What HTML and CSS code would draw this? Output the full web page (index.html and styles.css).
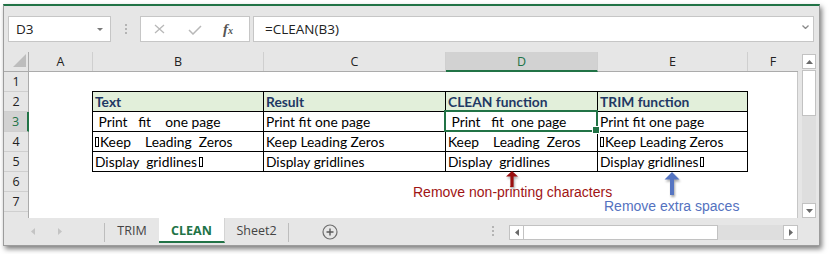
FILE: index.html
```html
<!DOCTYPE html>
<html>
<head>
<meta charset="utf-8">
<link rel="stylesheet" href="styles.css">
</head>
<body>
<div class="window">
  <div class="toolbar">
    <div class="namebox"><span>D3</span><svg class="nb-arrow" width="6" height="3" viewBox="0 0 6 3"><polygon points="0,0 6,0 3,3" fill="#7a7a7a"/></svg></div>
    <div class="grip"><i></i><i></i><i></i></div>
    <div class="fxbox">
      <svg class="ic-x" width="13" height="10" viewBox="0 0 13 10"><path d="M2 1 L11 9 M11 1 L2 9" stroke="#b8b8b8" stroke-width="1.3" fill="none"/></svg>
      <svg class="ic-ok" width="14" height="10" viewBox="0 0 14 10"><path d="M1 5 L5 9 L13 1" stroke="#b8b8b8" stroke-width="1.5" fill="none"/></svg>
      <span class="fx">f<span class="fxx">x</span></span>
    </div>
    <div class="formula"><span>=CLEAN(B3)</span><svg class="chev" width="7" height="4" viewBox="0 0 7 4"><path d="M0.5 0.5 L3.5 3.5 L6.5 0.5" stroke="#8a8a8a" stroke-width="1.3" fill="none"/></svg></div>
  </div>

  <div class="main">
    <div class="sheet">
      <div class="colhdr">
        <div class="corner"><svg width="24" height="19" viewBox="0 0 24 19"><polygon points="22,2 22,15 9,15" fill="#bdbdbd"/></svg></div>
        <div class="ch w-a">A</div>
        <div class="ch w-b">B</div>
        <div class="ch w-c">C</div>
        <div class="ch w-d sel">D</div>
        <div class="ch w-e">E</div>
        <div class="ch w-f">F</div>
      </div>
      <div class="body">
        <div class="rowhdr">
          <div class="rh">1</div>
          <div class="rh">2</div>
          <div class="rh sel">3</div>
          <div class="rh">4</div>
          <div class="rh">5</div>
          <div class="rh">6</div>
          <div class="rh">7</div>
          <div class="rh part"></div>
        </div>
        <div class="cells">
          <div class="tbl">
            <div class="h">Text</div>
            <div class="h">Result</div>
            <div class="h">CLEAN function</div>
            <div class="h">TRIM function</div>

            <div> Print   fit    one page</div>
            <div>Print fit one page</div>
            <div class="cur"> Print   fit  one page</div>
            <div>Print fit one page</div>

            <div><span class="np"></span>Keep    Leading  Zeros</div>
            <div>Keep Leading Zeros</div>
            <div>Keep    Leading  Zeros</div>
            <div><span class="np"></span>Keep Leading Zeros</div>

            <div>Display  gridlines<span class="np np-r"></span></div>
            <div>Display gridlines</div>
            <div>Display  gridlines</div>
            <div>Display gridlines<span class="np np-r"></span></div>
          </div>
        </div>
      </div>
    </div>
    <div class="vscroll">
      <div class="sbtn"><svg width="7" height="4" viewBox="0 0 7 4"><polygon points="0,4 7,4 3.5,0" fill="#6a6a6a"/></svg></div>
      <div class="vthumb"></div>
      <div class="vtrack"></div>
      <div class="sbtn"><svg width="7" height="4" viewBox="0 0 7 4"><polygon points="0,0 7,0 3.5,4" fill="#6a6a6a"/></svg></div>
    </div>
  </div>

  <div class="tabbar">
    <div class="nav">
      <svg width="4" height="7" viewBox="0 0 4 7"><polygon points="4,0 4,7 0,3.5" fill="#c4c4c4"/></svg>
      <svg class="nav-r" width="4" height="7" viewBox="0 0 4 7"><polygon points="0,0 0,7 4,3.5" fill="#c4c4c4"/></svg>
    </div>
    <div class="sep"></div>
    <div class="tab t-trim">TRIM</div>
    <div class="tab t-clean active">CLEAN</div>
    <div class="tab t-sheet2">Sheet2</div>
    <div class="sep"></div>
    <div class="addsheet"><svg width="16" height="16" viewBox="0 0 16 16"><circle cx="8" cy="8" r="7" stroke="#6e6e6e" stroke-width="1.2" fill="none"/><path d="M8 4.5 V11.5 M4.5 8 H11.5" stroke="#5a5a5a" stroke-width="1.4"/></svg></div>
    <div class="hgrip"><i></i><i></i><i></i></div>
    <div class="hscroll">
      <div class="hbtn"><svg width="4" height="7" viewBox="0 0 4 7"><polygon points="4,0 4,7 0,3.5" fill="#6a6a6a"/></svg></div>
      <div class="hthumb"></div>
      <div class="htrack"></div>
      <div class="hbtn"><svg width="4" height="7" viewBox="0 0 4 7"><polygon points="0,0 0,7 4,3.5" fill="#6a6a6a"/></svg></div>
    </div>
  </div>

  <div class="note note-red">Remove non-printing characters</div>
  <div class="note note-blue">Remove extra spaces</div>
  <svg class="arrow arrow-red" width="16" height="22" viewBox="0 0 16 22"><polygon points="7,2 13,7.5 8.6,7.5 8.6,18 5.4,18 5.4,7.5 1,7.5" fill="#9b0f0f"/></svg>
  <svg class="arrow arrow-blue" width="20" height="28" viewBox="0 0 20 28"><polygon points="10,2 17.5,9.5 12,9.5 12,25 8,25 8,9.5 2.5,9.5" fill="#5675c2"/></svg>
</div>
</body>
</html>
```

FILE: styles.css
```css
* { box-sizing: border-box; }
html, body { margin: 0; padding: 0; background: #ffffff; }
body {
  width: 829px;
  height: 254px;
  overflow: hidden;
  font-family: "Open Sans", "Noto Sans", sans-serif;
  color: #222;
}

.window {
  position: relative;
  margin: 4px 0 0 3px;
  width: 817px;
  height: 242px;
  background: #e6e6e6;
  border: 1px solid #9c9c9c;
  border-top: 2px solid #217346;
  box-shadow: 2px 3px 5px rgba(0, 0, 0, 0.5);
  display: flex;
  flex-direction: column;
}

/* ---------- formula bar ---------- */
.toolbar {
  height: 46px;
  flex: none;
  display: flex;
  align-items: flex-start;
  padding: 10px 5px 0 4px;
}
.namebox {
  width: 103px;
  height: 26px;
  background: #fff;
  border: 1px solid #c6c6c6;
  display: flex;
  align-items: center;
  padding-left: 7px;
  font-size: 13.5px;
  color: #222;
}
.nb-arrow { margin-left: auto; margin-right: 7px; }
.grip {
  width: 29px;
  height: 26px;
  display: flex;
  flex-direction: column;
  align-items: center;
  justify-content: center;
  gap: 2px;
}
.grip i, .hgrip i {
  display: block;
  width: 2px;
  height: 2px;
  background: #b4b4b4;
}
.fxbox {
  width: 110px;
  height: 26px;
  background: #fff;
  border: 1px solid #c6c6c6;
  display: flex;
  align-items: center;
  padding-left: 12px;
}
.ic-ok { margin-left: 22px; margin-top: 2px; }
.fx {
  margin-left: 21px;
  font-family: "Liberation Serif", "DejaVu Serif", serif;
  font-style: italic;
  font-weight: bold;
  font-size: 15px;
  color: #555;
  line-height: 1;
}
.fxx { font-size: 10px; }
.formula {
  flex: 1;
  margin-left: 3px;
  height: 26px;
  background: #fff;
  border: 1px solid #c6c6c6;
  display: flex;
  align-items: center;
  padding-left: 11px;
  padding-right: 4px;
  font-size: 13.5px;
  color: #222;
}
.chev { margin-left: auto; margin-top: -4px; }

/* ---------- sheet ---------- */
.main {
  display: flex;
  height: 166px;
  flex: none;
}
.sheet {
  width: 794px;
  display: flex;
  flex-direction: column;
}
.colhdr {
  display: flex;
  height: 20px;
  flex: none;
  border-bottom: 1px solid #ababab;
}
.corner {
  width: 25px;
  border-right: 1px solid #ababab;
}
.corner svg { display: block; }
.ch {
  border-right: 1px solid #cfcfcf;
  text-align: center;
  font-size: 12.5px;
  line-height: 19px;
  color: #222;
}
.w-a { width: 64px; }
.w-b { width: 171px; }
.w-c { width: 182px; }
.w-d { width: 152px; }
.w-e { width: 150px; }
.w-f { width: 50px; border-right: none; }
.ch.sel {
  background: #d2d2d2;
  color: #217346;
  height: 20px;
  border-bottom: 2px solid #217346;
}

.body {
  display: flex;
  flex: 1;
}
.rowhdr {
  width: 25px;
  border-right: 1px solid #ababab;
  display: flex;
  flex-direction: column;
}
.rh {
  height: 20px;
  flex: none;
  border-bottom: 1px solid #cfcfcf;
  text-align: center;
  font-size: 12.5px;
  line-height: 19px;
  color: #222;
}
.rh.part { height: 6px; border-bottom: none; }
.rh.sel {
  background: #d2d2d2;
  color: #217346;
  margin-right: -1px;
  border-right: 2px solid #217346;
}
.cells {
  flex: 1;
  background: #fff;
  border-right: 1px solid #c6c6c6;
  padding: 19px 0 0 63px;
}

.tbl {
  display: grid;
  grid-template-columns: 171px 182px 152px 150px;
  width: max-content;
  border-left: 1px solid #000;
  border-top: 1px solid #000;
  font-family: Lato, "Liberation Sans", sans-serif;
  font-size: 13.8px;
  color: #000;
}
.tbl > div {
  height: 20px;
  border-right: 1px solid #000;
  border-bottom: 1px solid #000;
  padding-left: 2px;
  line-height: 19px;
  white-space: pre;
  overflow: visible;
}
.tbl > .h {
  background: #e2efda;
  font-weight: bold;
  color: #1f3864;
}
.np {
  display: inline-block;
  width: 4px;
  height: 10px;
  border: 1px solid #000;
  margin-right: 1px;
}
.np.np-r { margin-right: 0; margin-left: 2px; }

.tbl > .cur { position: relative; }
.tbl > .cur::after {
  content: "";
  position: absolute;
  left: -2px;
  top: -2px;
  right: -1px;
  bottom: -1px;
  border: 2px solid #217346;
}
.tbl > .cur::before {
  content: "";
  position: absolute;
  right: -3px;
  bottom: -3px;
  width: 6px;
  height: 6px;
  background: #217346;
  border: 1px solid #fff;
  z-index: 2;
}

/* ---------- vertical scrollbar ---------- */
.vscroll {
  width: 21px;
  padding: 2px 3px 0 4px;
  display: flex;
  flex-direction: column;
}
.sbtn {
  height: 15px;
  flex: none;
  background: #fff;
  border: 1px solid #c2c2c2;
  display: flex;
  align-items: center;
  justify-content: center;
}
.vthumb {
  height: 46px;
  flex: none;
  margin-top: 1px;
  background: #fff;
  border: 1px solid #c2c2c2;
}
.vtrack {
  flex: 1;
  background: #dedede;
}

/* ---------- sheet tabs ---------- */
.tabbar {
  height: 27px;
  flex: none;
  display: flex;
  align-items: flex-start;
  font-size: 12.5px;
}
.nav {
  width: 100px;
  height: 27px;
  display: flex;
  align-items: center;
  padding-left: 27px;
}
.nav-r { margin-left: 23px; }
.sep {
  width: 1px;
  height: 19px;
  margin-top: 5px;
  background: #bdbdbd;
}
.tab {
  height: 25px;
  display: flex;
  align-items: center;
  justify-content: center;
  color: #444;
}
.t-trim { width: 54px; }
.t-clean { width: 66px; }
.t-sheet2 { width: 63px; }
.tab.active {
  background: #fff;
  color: #217346;
  font-weight: bold;
  border-bottom: 2px solid #217346;
  border-right: 1px solid #d4d4d4;
  padding-top: 2px;
}
.addsheet {
  margin-left: 33px;
  margin-top: 6px;
  width: 16px;
  height: 16px;
}
.addsheet svg { display: block; }
.hgrip {
  margin-left: 154px;
  margin-top: 8px;
  display: flex;
  flex-direction: column;
  gap: 2px;
}
.hscroll {
  margin-left: 15px;
  margin-top: 7px;
  width: 289px;
  height: 15px;
  display: flex;
}
.hbtn {
  width: 15px;
  height: 15px;
  flex: none;
  background: #fff;
  border: 1px solid #c2c2c2;
  display: flex;
  align-items: center;
  justify-content: center;
}
.hthumb {
  width: 194px;
  flex: none;
  background: #fff;
  border: 1px solid #c2c2c2;
  border-left: none;
}
.htrack {
  flex: 1;
  background: #dedede;
}

/* ---------- annotations ---------- */
.note {
  position: absolute;
  font-family: "Liberation Sans", Arial, sans-serif;
  font-size: 14px;
  line-height: 16px;
  white-space: nowrap;
}
.note-red { left: 409px; top: 178px; color: #a01414; }
.note-blue { left: 600px; top: 192px; color: #5472c0; }
.arrow {
  position: absolute;
  filter: drop-shadow(1px 2px 1px rgba(0, 0, 0, 0.35));
}
.arrow-red { left: 501px; top: 163px; }
.arrow-blue { left: 658px; top: 164px; }
```
